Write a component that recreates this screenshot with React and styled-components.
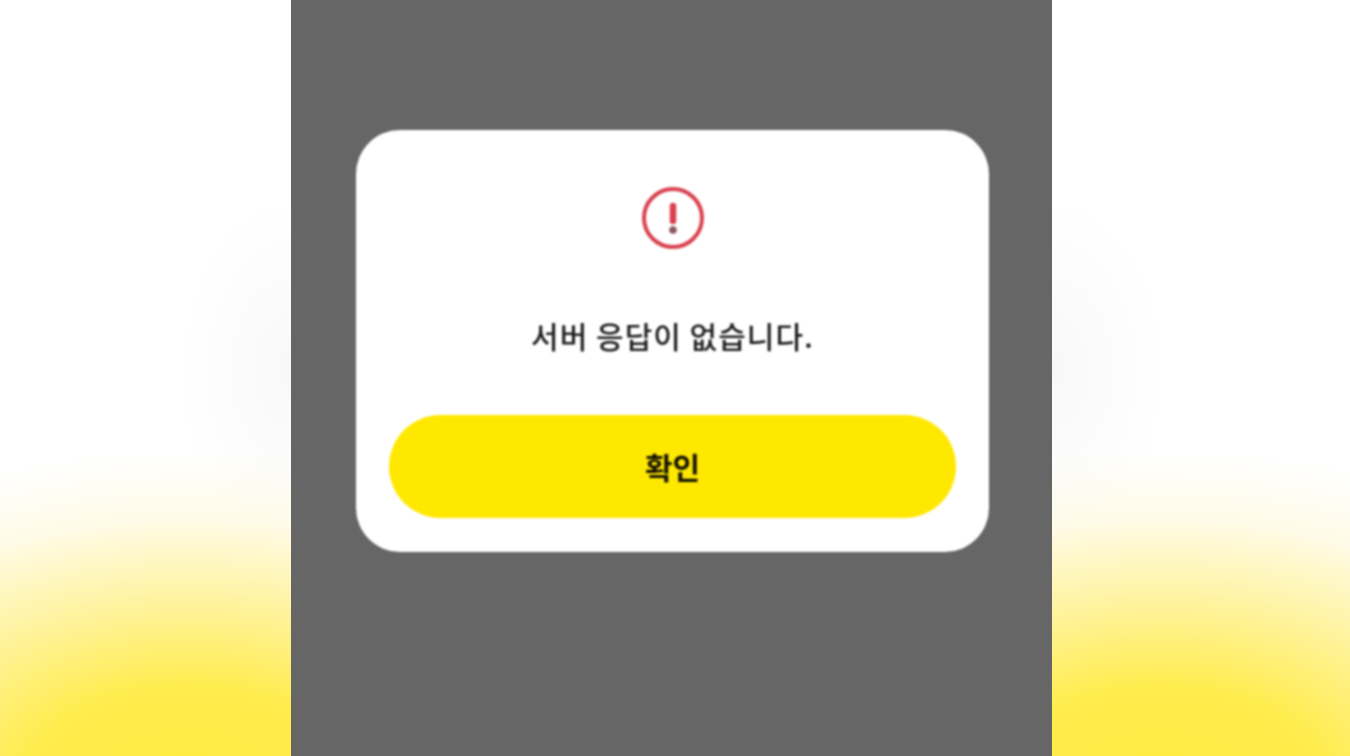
import React from 'react'
import styled, { createGlobalStyle } from 'styled-components';

const GlobalStyle = createGlobalStyle`
    html, body {
        margin: 0;
        padding: 0;
        background: #fff;
    }

    * {
        box-sizing: border-box;
    }
`;

const Page = styled.div`
    display: grid;
    grid-template-columns: 291px 761px 298px;
    height: 756px;
    overflow: hidden;
    font-family: "Noto Sans CJK KR", "Noto Sans", sans-serif;
`;

const SidePanel = styled.div`
    background:
        radial-gradient(ellipse 110px 170px at ${({ $side }) => ($side === 'left' ? '100%' : '0%')} 370px, rgba(235, 235, 235, 0.35), rgba(255, 255, 255, 0) 100%),
        radial-gradient(ellipse 560px 340px at ${({ $side }) => ($side === 'left' ? '190px' : '110px')} 790px, #ffeb3f 0%, #ffec4d 30%, #fff3a0 56%, #fffbe8 80%, #ffffff 100%);
`;

const Stage = styled.div`
    background: #666666;
    padding: 130px 63px 0 65px;
`;

const Card = styled.div`
    display: flex;
    flex-direction: column;
    align-items: center;
    height: 422px;
    padding: 56px 33px 34px;
    background: #fff;
    border-radius: 44px;
    filter: blur(1px);
`;

const AlertIcon = styled.svg`
    width: 64px;
    height: 64px;
    display: block;
`;

const Message = styled.p`
    margin: 65px 0 0;
    font-size: 30px;
    font-weight: 500;
    line-height: 40px;
    color: #1c1c1c;
    letter-spacing: 1px;
`;

const ConfirmButton = styled.button`
    width: 100%;
    height: 103px;
    margin-top: auto;
    padding: 0 0 2px;
    border: 0;
    border-radius: 52px;
    background: #ffe800;
    color: #141200;
    font-family: inherit;
    font-size: 30px;
    font-weight: 700;
`;

const App = () => {
    return (
        <>
            <GlobalStyle />
            <Page>
                <SidePanel $side="left" />
                <Stage>
                    <Card>
                        <AlertIcon viewBox="0 0 64 64" fill="none">
                            <circle cx="32" cy="32" r="29" stroke="#d9414f" strokeWidth="4" />
                            <path d="M32 20 V35" stroke="#d9414f" strokeWidth="6.5" strokeLinecap="round" />
                            <circle cx="32" cy="44" r="3.8" fill="#8a5a5e" />
                        </AlertIcon>
                        <Message>서버 응답이 없습니다.</Message>
                        <ConfirmButton>확인</ConfirmButton>
                    </Card>
                </Stage>
                <SidePanel $side="right" />
            </Page>
        </>
    )
}

export default App
